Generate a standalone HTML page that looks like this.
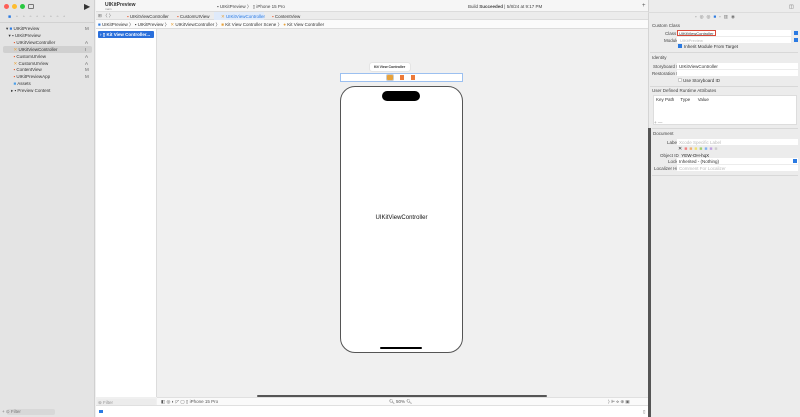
<!DOCTYPE html><html><head><style>
*{margin:0;padding:0;box-sizing:border-box}
body{width:800px;height:417px;overflow:hidden;font-family:"Liberation Sans",sans-serif;font-size:4.5px;color:#333;background:#f0f0f0;position:relative}
.a{position:absolute}
.t{position:absolute;white-space:nowrap}
</style></head><body>
<!-- sidebar -->
<div class="a" style="left:0;top:0;width:95px;height:417px;background:#e4e4e4;border-right:1px solid #d0d0d0"></div>
<div class="a" style="left:4px;top:4px;width:5px;height:5px;border-radius:50%;background:#fe5f57"></div>
<div class="a" style="left:12px;top:4px;width:5px;height:5px;border-radius:50%;background:#febc2e"></div>
<div class="a" style="left:20px;top:4px;width:5px;height:5px;border-radius:50%;background:#28c840"></div>
<div class="a" style="left:28px;top:4px;width:6px;height:5px;border:1px solid #777;border-radius:1px"></div>
<div class="t" style="left:84px;top:2px;font-size:8px;color:#333">▶</div>
<div class="t" style="left:8px;top:14px;font-size:5px;color:#888;letter-spacing:5px"><span style="color:#2a7ae2">■</span>▫▫▫▫▫▫▫▫</div>
<div class="a" style="left:0;top:22px;width:95px;height:1px;background:#d2d2d2"></div>
<div class="a" style="left:3px;top:46px;width:89px;height:7px;background:#d0d0d0;border-radius:2px"></div>
<div class="t" style="left:6px;top:26px;line-height:6.9px">
▾ <span style="color:#2a7ae2">■</span> UIKitPreview<br>
&nbsp;&nbsp;▾ ▪ UIKitPreview<br>
&nbsp;&nbsp;&nbsp;&nbsp;&nbsp;&nbsp;<span style="color:#e8572a">▪</span> UIKitViewController<br>
&nbsp;&nbsp;&nbsp;&nbsp;&nbsp;&nbsp;<span style="color:#e8a23a">✕</span> UIKitViewController<br>
&nbsp;&nbsp;&nbsp;&nbsp;&nbsp;&nbsp;<span style="color:#e8572a">▪</span> CustomUIView<br>
&nbsp;&nbsp;&nbsp;&nbsp;&nbsp;&nbsp;<span style="color:#e8a23a">✕</span> CustomUIView<br>
&nbsp;&nbsp;&nbsp;&nbsp;&nbsp;&nbsp;<span style="color:#e8572a">▪</span> ContentView<br>
&nbsp;&nbsp;&nbsp;&nbsp;&nbsp;&nbsp;<span style="color:#e8572a">▪</span> UIKitPreviewApp<br>
&nbsp;&nbsp;&nbsp;&nbsp;&nbsp;&nbsp;<span style="color:#4a9ee8">■</span> Assets<br>
&nbsp;&nbsp;&nbsp;&nbsp;▸ ▪ Preview Content</div>
<div class="t" style="left:85px;top:26px;line-height:6.9px;color:#666">M<br><br>A<br>I<br>A<br>A<br>M<br>M</div>
<div class="a" style="left:7px;top:409px;width:48px;height:6px;background:#d8d8d8;border-radius:2px"></div>
<div class="t" style="left:2px;top:409px;color:#777">+ ⊙ Filter</div>
<!-- main toolbar -->
<div class="a" style="left:96px;top:0;width:552px;height:12px;background:#f6f6f6;border-bottom:1px solid #dcdcdc"></div>
<div class="t" style="left:105px;top:2px;font-size:5px;font-weight:bold">UIKitPreview</div>
<div class="t" style="left:105px;top:7px;font-size:3px;color:#888">main</div>
<div class="t" style="left:217px;top:4px;color:#444">▪ UIKitPreview 〉 ▯ iPhone 15 Pro</div>
<div class="t" style="left:468px;top:4px;color:#444">Build <b>Succeeded</b> | 5/8/24 at 9:17 PM</div>
<div class="t" style="left:642px;top:3px;font-size:6px;color:#555">+</div>
<!-- tabs -->
<div class="a" style="left:96px;top:12px;width:552px;height:8px;background:#ececec;border-bottom:1px solid #dcdcdc"></div>
<div class="a" style="left:214px;top:12px;width:50px;height:8px;background:#dfeafa"></div>
<div class="t" style="left:98px;top:13px;color:#666">⊞ 〈 〉</div>
<div class="t" style="left:127px;top:14px"><span style="color:#e8572a">▪</span> UIKitViewController</div>
<div class="t" style="left:177px;top:14px"><span style="color:#e8572a">▪</span> CustomUIView</div>
<div class="t" style="left:221px;top:14px;color:#2a7ae2"><span style="color:#e8a23a">✕</span> UIKitViewController</div>
<div class="t" style="left:272px;top:14px"><span style="color:#e8572a">▪</span> ContentView</div>
<!-- jump bar -->
<div class="a" style="left:96px;top:20px;width:552px;height:9px;background:#fbfbfb;border-bottom:1px solid #dcdcdc"></div>
<div class="t" style="left:98px;top:22px"><span style="color:#2a7ae2">■</span> UIKitPreview 〉 ▪ UIKitPreview 〉 <span style="color:#e8a23a">✕</span> UIKitViewController 〉 <span style="color:#e8a23a">■</span> Kit View Controller Scene 〉 <span style="color:#e8a23a">●</span> Kit View Controller</div>
<!-- outline -->
<div class="a" style="left:96px;top:29px;width:61px;height:368px;background:#fff;border-right:1px solid #dcdcdc"></div>
<div class="a" style="left:98px;top:31px;width:56px;height:7px;background:#2a6fdb;border-radius:1px"></div>
<div class="t" style="left:100px;top:32px;color:#fff;font-weight:bold">› ▯ Kit View Controller...</div>
<div class="a" style="left:97px;top:399px;width:59px;height:6px;background:#ececec;border-radius:2px"></div>
<div class="t" style="left:98px;top:400px;color:#999">⊗ Filter</div>
<!-- canvas -->
<div class="a" style="left:157px;top:29px;width:491px;height:368px;background:#f0f0f0"></div>
<div class="a" style="left:370px;top:63px;width:40px;height:8px;background:#fff;border-radius:2px;box-shadow:0 0 1px #aaa"></div>
<div class="t" style="left:374px;top:65px;font-size:3.5px;font-weight:bold">Kit View Controller</div>
<div class="a" style="left:340px;top:73px;width:123px;height:9px;background:#fff;border:1px solid #9cc0f0"></div>
<div class="a" style="left:387px;top:75px;width:6px;height:5px;background:#e8a23a;border-radius:1px;box-shadow:0 0 0 1px #ccc"></div>
<div class="a" style="left:400px;top:75px;width:4px;height:5px;background:#ec7a3a"></div>
<div class="a" style="left:411px;top:75px;width:4px;height:5px;background:#ec7a3a"></div>
<div class="a" style="left:340px;top:86px;width:123px;height:267px;background:#fff;border:1px solid #555;border-radius:15px"></div>
<div class="a" style="left:382px;top:91px;width:38px;height:10px;background:#000;border-radius:5px"></div>
<div class="a" style="left:380px;top:347px;width:42px;height:2px;background:#000;border-radius:1px"></div>
<div class="t" style="left:340px;top:215px;width:123px;text-align:center;font-size:6px;color:#111">UIKitViewController</div>
<div class="a" style="left:257px;top:395px;width:290px;height:2px;background:#555;border-radius:1px"></div>
<div class="a" style="left:157px;top:397px;width:491px;height:8px;background:#fafafa;border-top:1px solid #e0e0e0"></div>
<div class="t" style="left:161px;top:399px;color:#555">◧ ◎ ◐ ◸ ▢ ▯ iPhone 15 Pro</div>
<div class="t" style="left:389px;top:399px;color:#555">🔍︎ 50% 🔍︎</div>
<div class="t" style="left:608px;top:399px;color:#666">⟩ ⊫ ⟡ ⊕ ▣</div>
<div class="a" style="left:96px;top:405px;width:552px;height:12px;background:#fff;border-top:1px solid #e0e0e0"></div>
<div class="a" style="left:99px;top:410px;width:4px;height:3px;background:#2a7ae2"></div>
<div class="t" style="left:643px;top:409px;color:#666">▯</div>
<!-- inspector -->
<div class="a" style="left:648px;top:0;width:152px;height:417px;background:#ececec;border-left:1px solid #d4d4d4"></div>
<div class="t" style="left:789px;top:4px;color:#666;font-size:5px">◫</div>
<div class="a" style="left:648px;top:12px;width:152px;height:1px;background:#dcdcdc"></div>
<div class="t" style="left:695px;top:14px;color:#777;letter-spacing:3px">▫◎◎<span style="color:#2a7ae2">■</span>▫▥◉</div>
<div class="t" style="left:652px;top:23px;color:#444">Custom Class</div>
<div class="t" style="left:665px;top:31px;color:#444">Class</div>
<div class="a" style="left:677px;top:30px;width:114px;height:6px;background:#fff"></div>
<div class="a" style="left:677px;top:30px;width:39px;height:6px;border:1px solid #d84a3a"></div>
<div class="t" style="left:679px;top:31px;font-size:4px">UIKitViewController</div>
<div class="a" style="left:794px;top:31px;width:4px;height:4px;background:#2a7ae2"></div>
<div class="t" style="left:664px;top:38px;color:#444">Module</div>
<div class="a" style="left:677px;top:37px;width:114px;height:6px;background:#fff"></div>
<div class="t" style="left:680px;top:38px;color:#bbb;font-size:4px">UIKitPreview</div>
<div class="a" style="left:794px;top:38px;width:4px;height:4px;background:#2a7ae2"></div>
<div class="a" style="left:678px;top:44px;width:4px;height:4px;background:#2a7ae2"></div>
<div class="t" style="left:684px;top:44px">Inherit Module From Target</div>
<div class="a" style="left:650px;top:52px;width:148px;height:1px;background:#d8d8d8"></div>
<div class="t" style="left:652px;top:55px;color:#444">Identity</div>
<div class="t" style="left:653px;top:64px;color:#444">Storyboard ID</div>
<div class="a" style="left:677px;top:63px;width:121px;height:6px;background:#fff"></div>
<div class="t" style="left:679px;top:64px">UIKitViewController</div>
<div class="t" style="left:652px;top:71px;color:#444">Restoration ID</div>
<div class="a" style="left:677px;top:70px;width:121px;height:6px;background:#fff"></div>
<div class="a" style="left:678px;top:78px;width:4px;height:4px;background:#fff;border:1px solid #ccc"></div>
<div class="t" style="left:683px;top:78px">Use Storyboard ID</div>
<div class="a" style="left:650px;top:86px;width:148px;height:1px;background:#d8d8d8"></div>
<div class="t" style="left:652px;top:88px;color:#444">User Defined Runtime Attributes</div>
<div class="a" style="left:653px;top:95px;width:144px;height:30px;background:#fff;border:1px solid #ddd"></div>
<div class="t" style="left:656px;top:97px">Key Path &nbsp;&nbsp;&nbsp; Type &nbsp;&nbsp;&nbsp;&nbsp; Value</div>
<div class="t" style="left:654px;top:120px;color:#888">+ —</div>
<div class="a" style="left:648px;top:128px;width:3px;height:289px;background:#555"></div>
<div class="a" style="left:652px;top:128px;width:146px;height:1px;background:#d8d8d8"></div>
<div class="t" style="left:653px;top:131px;color:#444">Document</div>
<div class="t" style="left:667px;top:140px;color:#444">Label</div>
<div class="a" style="left:677px;top:139px;width:121px;height:6px;background:#fff"></div>
<div class="t" style="left:679px;top:140px;color:#bbb">Xcode Specific Label</div>
<div class="t" style="left:678px;top:146px;font-size:5px;letter-spacing:2px">✕<span style="color:#f08080">■</span><span style="color:#f0b070">■</span><span style="color:#f0e070">■</span><span style="color:#a0d070">■</span><span style="color:#80b0f0">■</span><span style="color:#c0a0e0">■</span><span style="color:#ccc">■</span></div>
<div class="t" style="left:660px;top:153px;color:#444">Object ID &nbsp;<span style="color:#222">YEW-OH-hqX</span></div>
<div class="t" style="left:668px;top:159px;color:#444">Lock</div>
<div class="a" style="left:677px;top:158px;width:121px;height:6px;background:#fff"></div>
<div class="t" style="left:679px;top:159px">Inherited - (Nothing)</div>
<div class="a" style="left:793px;top:159px;width:4px;height:4px;background:#2a7ae2"></div>
<div class="t" style="left:654px;top:166px;color:#444">Localizer Hint</div>
<div class="a" style="left:677px;top:165px;width:121px;height:6px;background:#fff"></div>
<div class="t" style="left:679px;top:166px;color:#bbb">Comment For Localizer</div>
<div class="a" style="left:652px;top:175px;width:146px;height:1px;background:#d8d8d8"></div>
</body></html>
